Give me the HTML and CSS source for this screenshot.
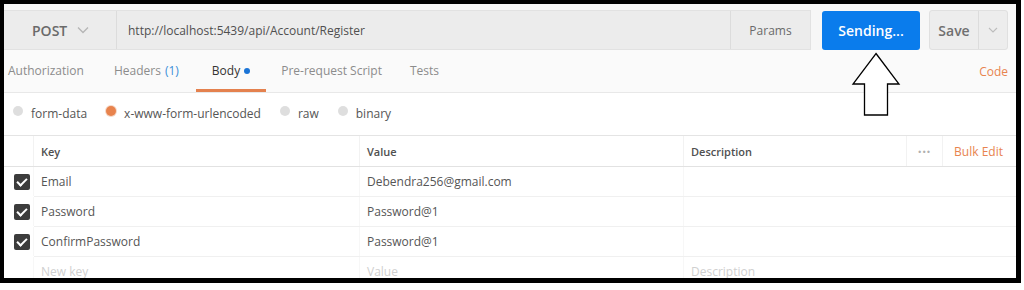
FILE: index.html
```html
<!DOCTYPE html>
<html lang="en">

<head>
  <meta charset="UTF-8">
  <title>Register request</title>
  <link rel="stylesheet" href="styles.css">
</head>

<body>

  <div class="frame">
    <!-- Request bar -->
    <div class="request-bar">
      <div class="url-group">
        <div class="method">POST
          <svg class="chevron" width="12" height="8" viewBox="0 0 12 8"><path d="M1 1.5 L6 6.5 L11 1.5" fill="none" stroke="#b5b5b5" stroke-width="1.3"/></svg>
        </div>
        <div class="url">http://localhost:5439/api/Account/Register</div>
        <div class="params">Params</div>
      </div>
      <button class="send">Sending...</button>
      <div class="save-group">
        <span class="save">Save</span>
        <span class="save-more">
          <svg width="10" height="6" viewBox="0 0 10 6"><path d="M1 1 L5 5 L9 1" fill="none" stroke="#bdbdbd" stroke-width="1.1"/></svg>
        </span>
      </div>
    </div>

    <!-- Tabs -->
    <div class="tabs">
      <span class="tab first">Authorization</span>
      <span class="tab">Headers <span class="count">(1)</span></span>
      <span class="tab active">Body <span class="dot"></span></span>
      <span class="tab pre">Pre-request Script</span>
      <span class="tab">Tests</span>
      <span class="code">Code</span>
    </div>

    <!-- Body modes -->
    <div class="modes">
      <label class="mode"><span class="radio"></span>form-data</label>
      <label class="mode"><span class="radio checked"></span>x-www-form-urlencoded</label>
      <label class="mode"><span class="radio"></span>raw</label>
      <label class="mode"><span class="radio"></span>binary</label>
    </div>

    <!-- Key / value table -->
    <table class="kv">
      <thead>
        <tr>
          <th class="check-col"></th>
          <th class="key-col">Key</th>
          <th class="value-col">Value</th>
          <th class="desc-col">
            <div class="desc-head">
              <span>Description</span>
              <span class="more">&bull;&bull;&bull;</span>
              <span class="bulk">Bulk Edit</span>
            </div>
          </th>
        </tr>
      </thead>
      <tbody>
        <tr>
          <td class="check-col"><span class="checkbox"></span></td>
          <td>Email</td>
          <td>Debendra256@gmail.com</td>
          <td></td>
        </tr>
        <tr>
          <td class="check-col"><span class="checkbox"></span></td>
          <td>Password</td>
          <td>Password@1</td>
          <td></td>
        </tr>
        <tr>
          <td class="check-col"><span class="checkbox"></span></td>
          <td>ConfirmPassword</td>
          <td>Password@1</td>
          <td></td>
        </tr>
        <tr class="placeholder">
          <td class="check-col"></td>
          <td>New key</td>
          <td>Value</td>
          <td>Description</td>
        </tr>
      </tbody>
    </table>
  </div>

  <!-- Annotation arrow pointing at the send button -->
  <svg class="callout-arrow" width="52" height="66" viewBox="0 0 52 66">
    <path d="M26 1.5 L49 32 L37.5 32 L37.5 63 L14.5 63 L14.5 32 L3 32 Z" fill="#fff" stroke="#000" stroke-width="1.3"/>
  </svg>

</body>

</html>
```

FILE: styles.css
```css
body {
  font-family: "Open Sans", Arial, sans-serif;
  background-color: #fff;
  margin: 0;
  position: relative;
  color: #505050;
}

.frame {
  width: 1012px;
  height: 274px;
  border: solid #000;
  border-width: 4px 5px 5px 4px;
  background-color: #fafafa;
  overflow: hidden;
}

/* request bar */
.request-bar {
  display: flex;
  align-items: flex-start;
  padding-top: 6px;
  height: 40px;
  background-color: #f7f7f7;
}

.url-group {
  display: flex;
  width: 806px;
  height: 38px;
  background-color: #ececec;
  border: 1px solid #e2e2e2;
  border-left: none;
  box-sizing: content-box;
}

.method {
  width: 113px;
  display: flex;
  align-items: center;
  gap: 10px;
  padding-left: 28px;
  box-sizing: border-box;
  font-size: 14px;
  font-weight: 600;
  color: #6a6a6a;
  border-right: 1px solid #dcdcdc;
}

.url {
  flex: 1;
  display: flex;
  align-items: center;
  padding-left: 11px;
  font-size: 12px;
  color: #505050;
}

.params {
  width: 79px;
  display: flex;
  align-items: center;
  justify-content: center;
  font-size: 12px;
  color: #6a6a6a;
  border-left: 1px solid #dcdcdc;
}

.send {
  margin: 1px 0 0 11px;
  width: 98px;
  height: 39px;
  border: none;
  border-radius: 3px;
  background-color: #0a7cec;
  color: #fff;
  font-family: inherit;
  font-size: 14px;
  font-weight: 600;
  padding: 0;
}

.save-group {
  display: flex;
  margin-left: 9px;
  height: 38px;
  border: 1px solid #e0e0e0;
  border-radius: 3px;
  background-color: #ededed;
}

.save {
  width: 48px;
  display: flex;
  align-items: center;
  justify-content: center;
  font-size: 14px;
  font-weight: 600;
  color: #707070;
  border-right: 1px solid #dcdcdc;
}

.save-more {
  width: 28px;
  display: flex;
  align-items: center;
  justify-content: center;
}

/* tabs */
.tabs {
  display: flex;
  align-items: stretch;
  height: 42px;
  border-bottom: 1px solid #e8e8e8;
  background-color: #fafafa;
  font-size: 12px;
}

.tab {
  display: flex;
  align-items: center;
  padding: 2px 15px 0;
  color: #8c8c8c;
  border-bottom: 3px solid transparent;
}

.tab.first {
  padding-left: 4px;
}

.tab.active {
  color: #333;
  border-bottom-color: #e4814e;
  padding: 2px 16px 0 16px;
  margin-left: 2px;
}

.tab.pre {
  padding-right: 13px;
}

.count {
  color: #3b8fd8;
  margin-left: 4px;
}

.dot {
  display: inline-block;
  width: 6px;
  height: 6px;
  border-radius: 50%;
  background-color: #1b74d6;
  margin-left: 4px;
}

.code {
  margin-left: auto;
  padding-right: 8px;
  display: flex;
  align-items: center;
  color: #e8844f;
}

/* body modes */
.modes {
  display: flex;
  align-items: center;
  height: 40px;
  padding: 0 0 2px 9px;
  background-color: #fff;
  border-bottom: 1px solid #e4e4e4;
  font-size: 12px;
  color: #555;
}

.mode {
  display: flex;
  align-items: center;
  margin-right: 19px;
}

.radio {
  width: 10px;
  height: 10px;
  border-radius: 50%;
  background-color: #dedede;
  margin-right: 8px;
  margin-top: -5px;
}

.radio.checked {
  background-color: #e8834d;
  box-shadow: 0 0 0 1px #f5d8c8;
}

/* table */
.kv {
  width: 100%;
  table-layout: fixed;
  border-collapse: collapse;
  background-color: #fff;
  font-size: 12px;
  color: #555;
}

.kv th {
  height: 30px;
  text-align: left;
  font-size: 11px;
  font-weight: 600;
  color: #505050;
  padding: 0 0 0 7px;
  border-bottom: 1px solid #e2e2e2;
  border-left: 1px solid #f2f2f2;
}

.kv td {
  height: 29px;
  padding: 0 0 0 7px;
  border-bottom: 1px solid #f0f0f0;
  border-left: 1px solid #f7f7f7;
}

.kv .check-col {
  width: 19px;
  padding: 0 0 0 10px;
  border-left: none;
  border-bottom-color: transparent;
}

.kv th.check-col {
  border-bottom-color: #e2e2e2;
}

.key-col {
  width: 318px;
}

.value-col {
  width: 316px;
}

.desc-head {
  display: flex;
  align-items: center;
}

.more {
  margin-left: auto;
  width: 35px;
  height: 30px;
  display: flex;
  align-items: center;
  justify-content: center;
  font-size: 9px;
  letter-spacing: 1px;
  color: #b0b0b0;
  border-left: 1px solid #f2f2f2;
  border-right: 1px solid #f2f2f2;
}

.bulk {
  font-size: 12px;
  font-weight: 400;
  color: #e8844f;
  padding: 0 13px 0 11px;
}

.checkbox {
  display: block;
  width: 16px;
  height: 16px;
  border-radius: 2px;
  background-color: #3c3c3c;
  position: relative;
}

.checkbox::after {
  content: "";
  position: absolute;
  left: 5px;
  top: 2px;
  width: 4px;
  height: 8px;
  border: solid #fff;
  border-width: 0 2px 2px 0;
  transform: rotate(45deg);
}

.placeholder td {
  color: #d0d0d0;
}

.callout-arrow {
  position: absolute;
  left: 850px;
  top: 52px;
}
```
